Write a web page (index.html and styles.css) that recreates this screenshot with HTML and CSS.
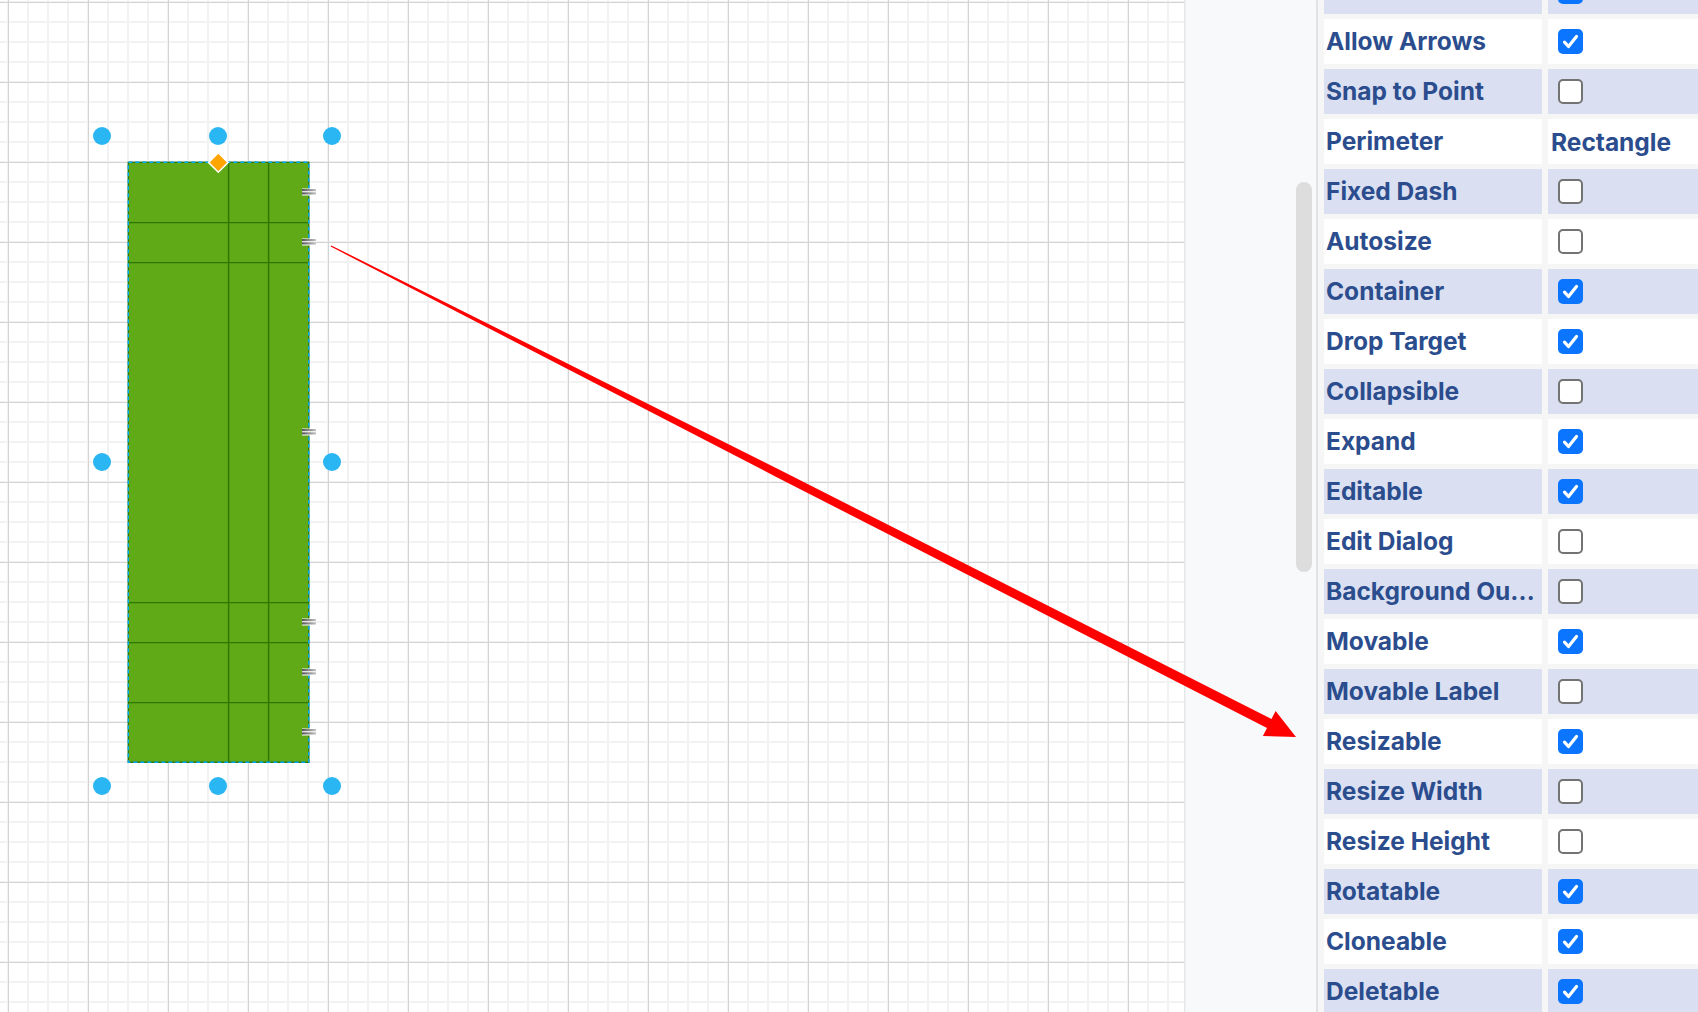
FILE: index.html
```html
<!DOCTYPE html>
<html>
<head>
<meta charset="utf-8">
<link rel="stylesheet" href="styles.css">
</head>
<body>
<div class="app">
  <div class="canvas"></div>
  <div class="gutter"><div class="thumb"></div></div>
  <div class="panel">
    <div class="props">
      <div class="row alt"><div class="label">Connectable</div><div class="value"><span class="cb on"><svg viewBox="0 0 25 25"><path d="M6.5 13.2l4 4.3 8-10"/></svg></span></div></div>
      <div class="row"><div class="label">Allow Arrows</div><div class="value"><span class="cb on"><svg viewBox="0 0 25 25"><path d="M6.5 13.2l4 4.3 8-10"/></svg></span></div></div>
      <div class="row alt"><div class="label">Snap to Point</div><div class="value"><span class="cb"></span></div></div>
      <div class="row"><div class="label">Perimeter</div><div class="value text">Rectangle</div></div>
      <div class="row alt"><div class="label">Fixed Dash</div><div class="value"><span class="cb"></span></div></div>
      <div class="row"><div class="label">Autosize</div><div class="value"><span class="cb"></span></div></div>
      <div class="row alt"><div class="label">Container</div><div class="value"><span class="cb on"><svg viewBox="0 0 25 25"><path d="M6.5 13.2l4 4.3 8-10"/></svg></span></div></div>
      <div class="row"><div class="label">Drop Target</div><div class="value"><span class="cb on"><svg viewBox="0 0 25 25"><path d="M6.5 13.2l4 4.3 8-10"/></svg></span></div></div>
      <div class="row alt"><div class="label">Collapsible</div><div class="value"><span class="cb"></span></div></div>
      <div class="row"><div class="label">Expand</div><div class="value"><span class="cb on"><svg viewBox="0 0 25 25"><path d="M6.5 13.2l4 4.3 8-10"/></svg></span></div></div>
      <div class="row alt"><div class="label">Editable</div><div class="value"><span class="cb on"><svg viewBox="0 0 25 25"><path d="M6.5 13.2l4 4.3 8-10"/></svg></span></div></div>
      <div class="row"><div class="label">Edit Dialog</div><div class="value"><span class="cb"></span></div></div>
      <div class="row alt"><div class="label">Background Outline</div><div class="value"><span class="cb"></span></div></div>
      <div class="row"><div class="label">Movable</div><div class="value"><span class="cb on"><svg viewBox="0 0 25 25"><path d="M6.5 13.2l4 4.3 8-10"/></svg></span></div></div>
      <div class="row alt"><div class="label">Movable Label</div><div class="value"><span class="cb"></span></div></div>
      <div class="row"><div class="label">Resizable</div><div class="value"><span class="cb on"><svg viewBox="0 0 25 25"><path d="M6.5 13.2l4 4.3 8-10"/></svg></span></div></div>
      <div class="row alt"><div class="label">Resize Width</div><div class="value"><span class="cb"></span></div></div>
      <div class="row"><div class="label">Resize Height</div><div class="value"><span class="cb"></span></div></div>
      <div class="row alt"><div class="label">Rotatable</div><div class="value"><span class="cb on"><svg viewBox="0 0 25 25"><path d="M6.5 13.2l4 4.3 8-10"/></svg></span></div></div>
      <div class="row"><div class="label">Cloneable</div><div class="value"><span class="cb on"><svg viewBox="0 0 25 25"><path d="M6.5 13.2l4 4.3 8-10"/></svg></span></div></div>
      <div class="row alt"><div class="label">Deletable</div><div class="value"><span class="cb on"><svg viewBox="0 0 25 25"><path d="M6.5 13.2l4 4.3 8-10"/></svg></span></div></div>
    </div>
  </div>

  <svg class="diagram" width="1316" height="1012" viewBox="0 0 1316 1012">
    <defs>
      <linearGradient id="hg" x1="0" x2="1" y1="0" y2="0">
        <stop offset="0" stop-color="#555555"/>
        <stop offset="1" stop-color="#c4c4c4"/>
      </linearGradient>
    </defs>
    <rect x="128.3" y="162.3" width="180.5" height="600" fill="#60a917" stroke="#2d7600" stroke-width="1.4"/>
    <path d="M228.6 162.3V762.3M268.6 162.3V762.3M128.3 222.6H308.8M128.3 262.6H308.8M128.3 602.6H308.8M128.3 642.6H308.8M128.3 702.6H308.8" stroke="#2d7600" stroke-width="1.4" fill="none"/>
    <rect x="128.3" y="162.3" width="180.5" height="600" fill="none" stroke="#00a8ff" stroke-width="1.4" stroke-dasharray="4 3"/>

    <g class="rowh">
      <g transform="translate(302 188.5)"><rect width="14" height="7" fill="#fff"/><rect y="0.5" width="14" height="2.2" fill="url(#hg)"/><rect y="3.8" width="14" height="2.2" fill="url(#hg)"/></g>
      <g transform="translate(302 238.5)"><rect width="14" height="7" fill="#fff"/><rect y="0.5" width="14" height="2.2" fill="url(#hg)"/><rect y="3.8" width="14" height="2.2" fill="url(#hg)"/></g>
      <g transform="translate(302 428.5)"><rect width="14" height="7" fill="#fff"/><rect y="0.5" width="14" height="2.2" fill="url(#hg)"/><rect y="3.8" width="14" height="2.2" fill="url(#hg)"/></g>
      <g transform="translate(302 618.5)"><rect width="14" height="7" fill="#fff"/><rect y="0.5" width="14" height="2.2" fill="url(#hg)"/><rect y="3.8" width="14" height="2.2" fill="url(#hg)"/></g>
      <g transform="translate(302 668.5)"><rect width="14" height="7" fill="#fff"/><rect y="0.5" width="14" height="2.2" fill="url(#hg)"/><rect y="3.8" width="14" height="2.2" fill="url(#hg)"/></g>
      <g transform="translate(302 728.5)"><rect width="14" height="7" fill="#fff"/><rect y="0.5" width="14" height="2.2" fill="url(#hg)"/><rect y="3.8" width="14" height="2.2" fill="url(#hg)"/></g>
    </g>

    <g fill="#29b6f2">
      <circle cx="102" cy="136" r="9"/>
      <circle cx="218" cy="136" r="9"/>
      <circle cx="332" cy="136" r="9"/>
      <circle cx="102" cy="462" r="9"/>
      <circle cx="332" cy="462" r="9"/>
      <circle cx="102" cy="786" r="9"/>
      <circle cx="218" cy="786" r="9"/>
      <circle cx="332" cy="786" r="9"/>
    </g>

    <polygon points="218.3,152.8 228,162.5 218.3,172.2 208.6,162.5" fill="#ffa500" stroke="#fff" stroke-width="1.6"/>

    <polygon fill="#ff0000" points="331.3,245.4 778.5,469.3 1271.5,718.9 1275.6,710.9 1296,737 1262.9,735.9 1267.0,727.9 774.8,476.2 330.7,246.6"/>
  </svg>
</div>
</body>
</html>
```

FILE: styles.css
```css
html, body {
  margin: 0;
  padding: 0;
}

body {
  width: 1698px;
  height: 1012px;
  overflow: hidden;
  background: #ffffff;
  font-family: Inter, "Noto Sans", "Liberation Sans", sans-serif;
}

.app {
  position: relative;
  display: flex;
  width: 1698px;
  height: 1012px;
  overflow: hidden;
}

.canvas {
  flex: 0 0 1184px;
  height: 1012px;
  background-color: #ffffff;
  background-image:
    linear-gradient(to right, #d3d3d3 1px, transparent 1px),
    linear-gradient(to bottom, #d3d3d3 1px, transparent 1px),
    linear-gradient(to right, #f2f2f2 2px, transparent 2px),
    linear-gradient(to bottom, #f2f2f2 2px, transparent 2px);
  background-size: 80px 80px, 80px 80px, 20px 20px, 20px 20px;
  background-position: 8px 2px, 8px 2px, 7px 1px, 7px 1px;
}

.gutter {
  flex: 0 0 132px;
  height: 1012px;
  background: #f8f9fa;
  border-right: 2px solid #e2e3e5;
  box-shadow: inset 2px 0 2px -1px rgba(0, 0, 0, 0.10);
}

.thumb {
  width: 16px;
  height: 390px;
  margin: 182px 0 0 112px;
  border-radius: 8px;
  background: #dddddd;
}

.panel {
  flex: 1 1 auto;
  height: 1012px;
  background: #f6f6f7;
  padding-left: 6px;
  overflow: hidden;
}

.props {
  display: flex;
  flex-direction: column;
  gap: 5px;
  margin-top: -31px;
}

.row {
  display: flex;
  gap: 6px;
  height: 45px;
}

.label,
.value {
  display: flex;
  align-items: center;
  height: 45px;
  background: #ffffff;
  color: #2b4d8e;
  font-weight: 700;
  font-size: 24.5px;
}

.row.alt .label,
.row.alt .value {
  background: #dae0f1;
}

.label {
  flex: 0 0 218px;
  box-sizing: border-box;
  padding: 0 6px 0 2px;
  white-space: nowrap;
  overflow: hidden;
  text-overflow: ellipsis;
  display: block;
  line-height: 45px;
}

.value {
  flex: 1 1 auto;
  padding-left: 10px;
}

.value.text {
  padding-left: 3px;
}

.cb {
  box-sizing: border-box;
  width: 25px;
  height: 25px;
  border: 2px solid #737373;
  border-radius: 5px;
  background: #ffffff;
  display: flex;
  align-items: center;
  justify-content: center;
}

.cb.on {
  border: none;
  background: #0b75ff;
}

.cb svg {
  width: 25px;
  height: 25px;
  fill: none;
  stroke: #ffffff;
  stroke-width: 3.2;
  stroke-linecap: round;
  stroke-linejoin: round;
}

.diagram {
  position: absolute;
  left: 0;
  top: 0;
  pointer-events: none;
}
```
